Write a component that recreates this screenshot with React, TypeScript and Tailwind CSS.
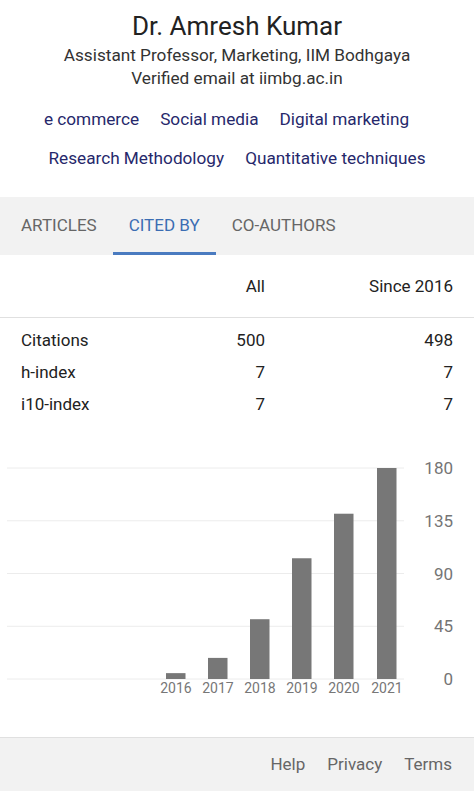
const interestsTop = ["e commerce", "Social media", "Digital marketing"];
const interestsBottom = ["Research Methodology", "Quantitative techniques"];

const stats = [
  { label: "Citations", all: "500", since: "498" },
  { label: "h-index", all: "7", since: "7" },
  { label: "i10-index", all: "7", since: "7" },
];

const years = [
  { year: "2016", value: 5, x: 166 },
  { year: "2017", value: 18, x: 208 },
  { year: "2018", value: 51, x: 250 },
  { year: "2019", value: 103, x: 292 },
  { year: "2020", value: 141, x: 334 },
  { year: "2021", value: 180, x: 377 },
];

const ticks = [180, 135, 90, 45, 0];

function CitationChart() {
  const base = 258;
  const top = 47;
  const scale = (base - top) / 180;
  return (
    <svg width="474" height="316" className="block">
      {ticks.map((t) => {
        const y = base - t * scale;
        return (
          <g key={t}>
            <line x1="7" x2="404" y1={y} y2={y} stroke="#ececec" strokeWidth="1" />
            <text x="453" y={y + 6} textAnchor="end" fontSize="17" fill="#757575" fontFamily="Roboto, sans-serif">
              {t}
            </text>
          </g>
        );
      })}
      {years.map((d) => (
        <g key={d.year}>
          <rect x={d.x} y={base - d.value * scale} width="19.5" height={d.value * scale} fill="#777777" />
          <text x={d.x + 10} y="272" textAnchor="middle" fontSize="14" fill="#777777" fontFamily="Roboto, sans-serif">
            {d.year}
          </text>
        </g>
      ))}
    </svg>
  );
}

export default function App() {
  return (
    <div className="w-[474px] h-[791px] bg-white flex flex-col overflow-hidden font-['Roboto',sans-serif]">
      {/* ==== Profile ==== */}
      <div className="pt-[10px] text-center">
        <h1 className="text-[26px] leading-[32px] text-[#222]">Dr. Amresh Kumar</h1>
        <p className="mt-[2px] text-[17.2px] leading-[23px] text-[#333]">
          Assistant Professor, Marketing, IIM Bodhgaya
        </p>
        <p className="text-[17.2px] leading-[23px] text-[#333]">Verified email at iimbg.ac.in</p>
      </div>

      <div className="mt-[10px] text-[17.2px] leading-[39px] text-[#26286b]">
        <div className="flex justify-center gap-[21px] pr-[21px]">
          {interestsTop.map((i) => (
            <span key={i}>{i}</span>
          ))}
        </div>
        <div className="flex justify-center gap-[21px]">
          {interestsBottom.map((i) => (
            <span key={i}>{i}</span>
          ))}
        </div>
      </div>

      {/* ==== Tabs ==== */}
      <div className="mt-[19px] h-[58px] bg-[#f2f2f2] flex pl-[5px] text-[17px] uppercase">
        <div className="px-[16px] flex items-center text-[#666]">Articles</div>
        <div className="px-[16px] flex items-center text-[#3b6db3] border-b-[3px] border-[#4a7bc0] pt-[3px]">
          Cited by
        </div>
        <div className="px-[16px] flex items-center text-[#666]">Co-authors</div>
      </div>

      {/* ==== Stats table ==== */}
      <div className="h-[63px] pt-[2px] border-b border-[#e0e0e0] grid grid-cols-[1fr_120px_188px] items-center px-[21px] text-[17px] text-[#222]">
        <span />
        <span className="text-right">All</span>
        <span className="text-right">Since 2016</span>
      </div>
      <div className="pt-[7px] px-[21px] text-[17px] text-[#222]">
        {stats.map((s) => (
          <div key={s.label} className="h-[32px] grid grid-cols-[1fr_120px_188px] items-center">
            <span>{s.label}</span>
            <span className="text-right">{s.all}</span>
            <span className="text-right">{s.since}</span>
          </div>
        ))}
      </div>

      <CitationChart />

      {/* ==== Footer ==== */}
      <footer className="flex-1 pt-[1px] border-t border-[#e0e0e0] bg-[#f2f2f2] flex justify-end items-center gap-[22px] pr-[22px] text-[17px] text-[#666]">
        <span>Help</span>
        <span>Privacy</span>
        <span>Terms</span>
      </footer>
    </div>
  );
}
